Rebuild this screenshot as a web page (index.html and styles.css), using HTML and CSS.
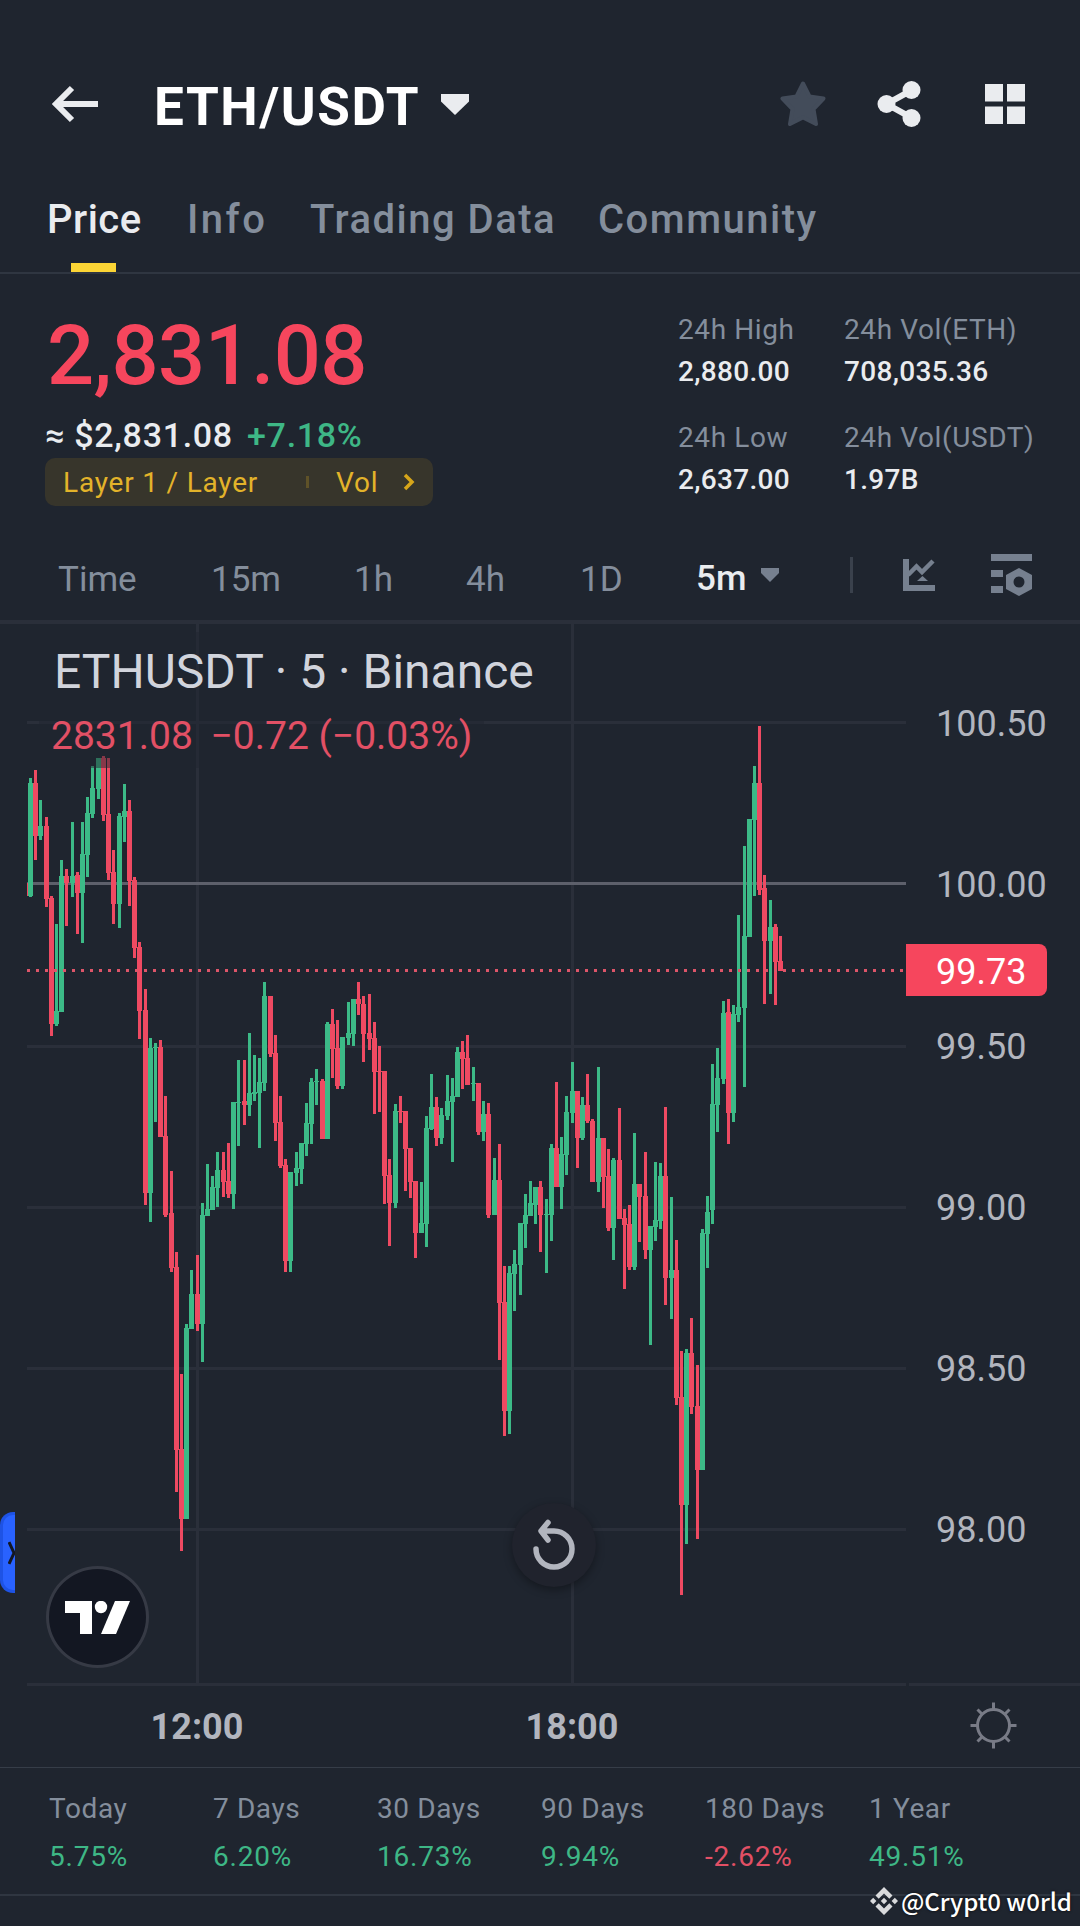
FILE: index.html
```html
<!DOCTYPE html>
<html lang="en">
<head>
<meta charset="UTF-8">
<meta name="viewport" content="width=device-width, initial-scale=1.0">
<title>ETH/USDT</title>
<link rel="stylesheet" href="styles.css">
</head>
<body>

<header class="header">
    <svg class="back" width="48" height="38" viewBox="0 0 48 38">
        <path d="M21 3 L5 19 L21 35 M5 19 H47" fill="none" stroke="#eaecef" stroke-width="6"/>
    </svg>
    <h1 class="pair">ETH/USDT</h1>
    <svg class="pair-caret" width="28" height="21" viewBox="0 0 28 21"><path d="M0 0 H28 V7.500 L14 21 L0 7.500 Z" fill="#eaecef"/></svg>
    <div class="actions">
        <svg width="46" height="48" viewBox="0 0 46 48"><path d="M23 3.500 L29.500 16.500 L43.500 18.500 L33.500 29 L36 44 L23 37.500 L10 44 L12.500 29 L2.500 18.500 L16.500 16.500 Z" fill="#434c5a" stroke="#434c5a" stroke-width="4" stroke-linejoin="round"/></svg>
        <svg width="44" height="48" viewBox="0 0 44 48">
            <path d="M35 10 L9.500 24 L35 38" fill="none" stroke="#eaecef" stroke-width="6"/>
            <g fill="#eaecef"><circle cx="9.500" cy="24" r="9"/><circle cx="34.500" cy="10" r="9"/><circle cx="34.500" cy="38" r="9"/></g>
        </svg>
        <svg width="40" height="40" viewBox="0 0 40 40"><path d="M0 0 H18 V17.500 H0 Z M22 0 H40 V17.500 H22 Z M0 22.500 H18 V40 H0 Z M22 22.500 H40 V40 H22 Z" fill="#eaecef"/></svg>
    </div>
</header>

<nav class="tabs">
    <a class="tab active">Price</a>
    <a class="tab info">Info</a>
    <a class="tab">Trading Data</a>
    <a class="tab">Community</a>
</nav>

<section class="ticker">
    <div>
        <div class="price">2,831.08</div>
        <div class="fiat">≈ $2,831.08 <span class="change">+7.18%</span></div>
        <div class="tag">
            <span class="tag-name">Layer 1 / Layer</span>
            <i class="tag-line"></i>
            <span>Vol</span>
            <svg width="12" height="18" viewBox="0 0 12 18"><path d="M2 2 L9 9 L2 16" fill="none" stroke="#d6a51a" stroke-width="3.500"/></svg>
        </div>
    </div>
    <dl class="stats">
        <div><dt>24h High</dt><dd>2,880.00</dd></div>
        <div><dt>24h Vol(ETH)</dt><dd>708,035.36</dd></div>
        <div><dt>24h Low</dt><dd>2,637.00</dd></div>
        <div><dt>24h Vol(USDT)</dt><dd>1.97B</dd></div>
    </dl>
</section>

<div class="intervals">
    <span>Time</span>
    <span>15m</span>
    <span>1h</span>
    <span>4h</span>
    <span>1D</span>
    <span class="current">5m</span>
    <svg width="18" height="14" viewBox="0 0 18 14"><path d="M0 0 H18 V5 L9 14 L0 5 Z" fill="#76808f"/></svg>
    <i class="divider"></i>
    <svg width="32" height="32" viewBox="0 0 32 32">
        <path d="M3 0 V29 H32" fill="none" stroke="#76808f" stroke-width="6"/>
        <path d="M5 16 L13.500 7.500 L19 13 L30 2" fill="none" stroke="#76808f" stroke-width="4.500"/>
        <path d="M14 22 H25 L19.500 17 Z" fill="#76808f"/>
    </svg>
    <svg width="42" height="42" viewBox="0 0 42 42">
        <path d="M0 0 H41 V7 H0 Z M0 16 H12 V23 H0 Z M0 32 H12 V39 H0 Z" fill="#76808f"/>
        <path fill-rule="evenodd" d="M28 14 L41 21 V35 L28 42 L15 35 V21 Z M28 22.500 A5.500 5.500 0 1 0 28 33.500 A5.500 5.500 0 1 0 28 22.500 Z" fill="#76808f"/>
    </svg>
</div>

<section class="chart">
    <svg class="plot" width="1080" height="1147" viewBox="0 620 1080 1147">
        <g fill="#2a2f3a">
            <rect x="0" y="620" width="1080" height="4"/>
            <rect x="27" y="721" width="879" height="3"/>
            <rect x="27" y="1045" width="879" height="3"/>
            <rect x="27" y="1206" width="879" height="3"/>
            <rect x="27" y="1367" width="879" height="3"/>
            <rect x="27" y="1528" width="879" height="3"/>
            <rect x="196" y="624" width="3" height="1059"/>
            <rect x="571" y="624" width="3" height="1059"/>
            <rect x="27" y="1683" width="879" height="3"/>
            <rect x="909" y="1683" width="171" height="3"/>
        </g>
        <rect x="27" y="882" width="879" height="3" fill="#5d606b"/>
        <g id="candles" shape-rendering="crispEdges"></g>
        <line x1="27" y1="970.500" x2="906" y2="970.500" stroke="#dd5569" stroke-width="3" stroke-dasharray="3 6"/>
        <g class="scale">
            <text x="936" y="736">100.50</text>
            <text x="936" y="897">100.00</text>
            <text x="936" y="1059">99.50</text>
            <text x="936" y="1220">99.00</text>
            <text x="936" y="1381">98.50</text>
            <text x="936" y="1542">98.00</text>
        </g>
        <path d="M906 944 H1039 A8 8 0 0 1 1047 952 V988 A8 8 0 0 1 1039 996 H906 Z" fill="#f6465d"/>
        <text class="last" x="936" y="984">99.73</text>
        <g class="times">
            <text x="197" y="1739">12:00</text>
            <text x="572" y="1739">18:00</text>
        </g>
        <g transform="translate(993.500 1725.500)" fill="none" stroke="#787b86" stroke-width="3">
            <circle r="16"/>
            <path d="M0 -16 V-23 M0 16 V23 M-16 0 H-23 M16 0 H23 M-11.300 -11.300 L-16 -16 M11.300 -11.300 L16 -16 M-11.300 11.300 L-16 16 M11.300 11.300 L16 16"/>
        </g>
    </svg>

    <div class="legend">
        <div class="legend-title">ETHUSDT · 5 · Binance</div>
        <div class="legend-values"><span>2831.08</span> <span>−0.72 (−0.03%)</span></div>
    </div>

    <div class="drawer">
        <svg width="7" height="24" viewBox="0 0 7 24"><path d="M1 1 L6 12 L1 23" fill="none" stroke="#131722" stroke-width="3"/></svg>
    </div>

    <div class="tv-logo">
        <svg width="65" height="33" viewBox="0 0 65 33" fill="#fff"><path d="M0 0 H27 V33 H15 V12 H0 Z"/><circle cx="36" cy="6" r="6.200"/><path d="M50 0 H65 L51 33 H36 Z"/></svg>
    </div>

    <div class="reset">
        <svg width="46" height="52" viewBox="0 0 46 52"><path d="M5 30 A18 18 0 1 0 23 12 H11 M17 3.500 L10 12 L17 21" fill="none" stroke="#b2b5be" stroke-width="5.500" stroke-linecap="round" stroke-linejoin="round"/></svg>
    </div>
</section>

<section class="periods">
    <div><span>Today</span><b>5.75%</b></div>
    <div><span>7 Days</span><b>6.20%</b></div>
    <div><span>30 Days</span><b>16.73%</b></div>
    <div><span>90 Days</span><b>9.94%</b></div>
    <div><span>180 Days</span><b class="down">-2.62%</b></div>
    <div><span>1 Year</span><b>49.51%</b></div>
</section>

<div class="credit">
    <svg width="28" height="28" viewBox="0 0 28 28" fill="#d9dadc"><path d="M14 0 L22.500 8.500 L19.300 11.700 L14 6.400 L8.700 11.700 L5.500 8.500 Z M14 28 L5.500 19.500 L8.700 16.300 L14 21.600 L19.300 16.300 L22.500 19.500 Z M3.200 10.800 L6.400 14 L3.200 17.200 L0 14 Z M24.800 10.800 L28 14 L24.800 17.200 L21.600 14 Z M14 10.800 L17.200 14 L14 17.200 L10.800 14 Z"/></svg>
    <span>@Crypt0 w0rld</span>
</div>

<script src="chart.js"></script>
</body>
</html>
```

FILE: styles.css
```css
body {
    margin: 0;
    width: 1080px;
    height: 1926px;
    overflow: hidden;
    background-color: #1f252f;
    color: #eaecef;
    font-family: Roboto, "Liberation Sans", sans-serif;
}

svg {
    display: block;
    flex: none;
}

.header {
    display: flex;
    align-items: center;
    height: 108px;
    padding: 50px 55px 0 51px;
}

.pair {
    margin: 6px 0 0 55px;
    font-size: 53px;
    font-weight: 700;
    line-height: 64px;
    letter-spacing: 1.6px;
    color: #fff;
}

.pair-caret {
    margin-left: 21px;
}

.actions {
    display: flex;
    align-items: center;
    margin-left: auto;
}

.actions svg + svg {
    margin-left: 51px;
}

.actions svg + svg + svg {
    margin-left: 64px;
}

/* tabs */
.tabs {
    display: grid;
    grid-template-columns: 140px 123px 288px auto;
    height: 74px;
    padding: 40px 0 0 47px;
    border-bottom: 2px solid #2f3641;
}

.tab {
    position: relative;
    justify-self: start;
    font-size: 40px;
    font-weight: 500;
    line-height: 44px;
    letter-spacing: 1.5px;
    color: #848e9c;
}

.tab.info {
    letter-spacing: 2.5px;
}

.tab.active {
    letter-spacing: 0.5px;
    color: #eaecef;
}

.tab.active::after {
    content: "";
    position: absolute;
    left: 24px;
    bottom: 0;
    width: 45px;
    height: 9px;
    background-color: #fcd535;
}

/* price and 24h numbers */
.ticker {
    display: flex;
    justify-content: space-between;
    height: 222px;
    padding: 40px 36px 0 45px;
}

.price {
    margin: 0 0 15px 2px;
    font-size: 83px;
    font-weight: 500;
    line-height: 84px;
    letter-spacing: -0.6px;
    color: #f6465d;
}

.fiat {
    font-size: 34px;
    font-weight: 500;
    line-height: 44px;
    letter-spacing: 0.7px;
}

.change {
    margin-left: 5px;
    color: #3eb786;
}

.tag {
    display: flex;
    align-items: center;
    box-sizing: border-box;
    width: 388px;
    height: 48px;
    margin-top: 1px;
    padding: 0 18px;
    border-radius: 10px;
    background-color: #37352b;
    font-size: 28px;
    letter-spacing: 0.8px;
    color: #e3b32a;
}

.tag-name {
    width: 243px;
}

.tag-line {
    width: 3px;
    height: 12px;
    margin-right: 27px;
    background-color: #5f5228;
}

.tag svg {
    margin-left: auto;
}

.stats {
    display: grid;
    grid-template-columns: 166px 201px;
    row-gap: 24px;
    align-content: start;
    margin: -5px -1px 0 0;
    font-size: 28px;
    line-height: 42px;
    letter-spacing: 0.6px;
}

.stats dt {
    color: #848e9c;
}

.stats dd {
    margin: 0;
    font-weight: 500;
    letter-spacing: 0.3px;
}

.intervals {
    display: grid;
    grid-template-columns: 153px 143px 112px 114px 116px 65px 89px 53px 88px auto;
    align-items: center;
    height: 84px;
    padding-left: 58px;
    font-size: 35px;
    color: #848e9c;
}

.intervals span {
    padding-top: 3px;
}

.intervals svg {
    margin-top: -6px;
}

.intervals .current {
    padding-top: 0;
    font-weight: 500;
    color: #eaecef;
}

.divider {
    width: 3px;
    height: 36px;
    margin-top: -6px;
    background-color: #3a414c;
}

/* chart */
.chart {
    position: relative;
    height: 1147px;
    border-bottom: 1px solid #363d48;
}

.up {
    fill: #3cba87;
}

.down {
    fill: #ee4a62;
}

.scale text,
.last {
    font-size: 36px;
    fill: #b2b5be;
}

.last {
    fill: #fff;
}

.times text {
    font-size: 36px;
    font-weight: 700;
    text-anchor: middle;
    fill: #b2b5be;
}

.legend {
    position: absolute;
    top: 12px;
    left: 39px;
}

.legend-title,
.legend-values {
    width: max-content;
    background-color: rgba(31, 37, 47, 0.5);
}

.legend-title {
    padding: 0 15px;
    font-size: 48px;
    line-height: 79px;
    color: #d1d4dc;
}

.legend-values {
    padding: 1px 12px 8px;
    font-size: 39px;
    line-height: 48px;
    color: #e25065;
}

.legend-values span + span {
    margin-left: 8px;
}

.drawer {
    position: absolute;
    top: 892px;
    left: 0;
    display: flex;
    align-items: center;
    justify-content: flex-end;
    box-sizing: border-box;
    width: 15px;
    height: 81px;
    border: 3px solid #1e53e5;
    border-right: 0;
    border-radius: 13px 0 0 13px;
    background-color: #2962ff;
}

.tv-logo {
    position: absolute;
    top: 946px;
    left: 46px;
    display: flex;
    align-items: center;
    justify-content: center;
    box-sizing: border-box;
    width: 103px;
    height: 102px;
    border: 3px solid #363a45;
    border-radius: 50%;
    background-color: #131722;
}

.reset {
    position: absolute;
    top: 883px;
    left: 512px;
    display: flex;
    align-items: center;
    justify-content: center;
    width: 84px;
    height: 84px;
    border-radius: 50%;
    background-color: #20232d;
    box-shadow: 0 3px 8px rgba(0, 0, 0, 0.35);
}

/* returns by period */
.periods {
    display: grid;
    grid-template-columns: repeat(6, 164px);
    height: 109px;
    padding: 17px 0 0 49px;
    border-bottom: 2px solid #2f3641;
    font-size: 28px;
    line-height: 48px;
    letter-spacing: 0.6px;
}

.periods span {
    display: block;
    color: #848e9c;
}

.periods b {
    font-weight: 400;
    letter-spacing: 0.8px;
    color: #3eb786;
}

.periods .down {
    color: #e25065;
}

.credit {
    display: flex;
    align-items: center;
    justify-content: flex-end;
    gap: 3px;
    margin-top: -13px;
    padding-right: 8px;
    font-family: "Noto Sans CJK SC", "Noto Sans", sans-serif;
    font-size: 24px;
    font-weight: 500;
    line-height: 36px;
    color: #fff;
    text-shadow: 0 0 3px rgba(0, 0, 0, 0.8);
}
```

FILE: chart.js
```js
// direction (1 up, 0 down), wick top, body top, body bottom, wick bottom
var candles = [
    [1,778,783,896,897], [0,770,783,836,860], [1,800,826,836,840], [0,817,826,899,907],
    [0,896,898,1024,1036], [1,924,1011,1024,1026], [1,860,876,1012,1012], [0,869,876,883,926],
    [1,822,876,883,897], [0,872,875,893,934], [1,822,854,893,943], [1,797,813,855,877],
    [1,766,788,814,818], [1,758,758,789,799], [0,756,758,815,821], [0,758,814,873,880],
    [0,850,872,904,924], [1,813,816,904,928], [1,784,811,817,842], [0,800,811,881,906],
    [0,877,880,948,958], [0,942,947,1011,1039], [0,989,1010,1193,1205], [1,1038,1048,1193,1222],
    [1,1043,1047,1048,1122], [0,1040,1047,1137,1137], [0,1096,1136,1215,1217], [0,1171,1213,1268,1272],
    [0,1252,1267,1450,1492], [0,1374,1449,1519,1551], [1,1324,1328,1519,1519], [1,1270,1294,1329,1329],
    [0,1255,1294,1324,1331], [1,1203,1215,1324,1362], [1,1164,1209,1216,1216], [1,1176,1187,1210,1210],
    [1,1152,1170,1188,1207], [0,1152,1170,1182,1197], [0,1143,1181,1194,1198], [1,1102,1102,1194,1209],
    [1,1060,1102,1103,1146], [0,1060,1101,1105,1125], [1,1033,1093,1105,1116], [1,1055,1092,1094,1101],
    [1,1058,1082,1093,1148], [1,982,996,1083,1091], [0,996,996,1054,1057], [0,1035,1053,1123,1141],
    [0,1096,1122,1166,1168], [0,1159,1165,1261,1272], [1,1172,1172,1261,1272], [1,1152,1168,1173,1186],
    [1,1143,1143,1169,1184], [1,1103,1123,1144,1156], [1,1078,1082,1124,1144], [1,1069,1081,1082,1105],
    [0,1079,1081,1139,1139], [1,1022,1024,1139,1139], [0,1009,1024,1049,1078], [0,1020,1048,1086,1089],
    [1,1037,1037,1086,1089], [1,1002,1033,1038,1045], [1,999,999,1034,1046], [0,982,999,1004,1015],
    [0,996,1004,1034,1062], [0,994,1033,1039,1050], [0,1022,1038,1072,1114], [0,1046,1071,1072,1112],
    [0,1071,1071,1176,1204], [0,1159,1175,1203,1246], [1,1104,1111,1203,1208], [0,1096,1111,1112,1123],
    [0,1111,1111,1149,1191], [0,1148,1148,1182,1198], [0,1181,1181,1233,1258], [1,1182,1223,1233,1233],
    [1,1116,1128,1224,1247], [1,1074,1107,1129,1130], [0,1097,1107,1138,1146], [1,1108,1115,1138,1144],
    [1,1075,1101,1116,1120], [1,1078,1096,1102,1162], [1,1047,1052,1097,1097], [0,1041,1052,1059,1089],
    [0,1035,1058,1085,1085], [1,1067,1083,1084,1101], [0,1083,1083,1132,1135], [1,1101,1114,1132,1141],
    [0,1103,1114,1215,1218], [1,1158,1180,1215,1215], [0,1144,1180,1303,1360], [0,1266,1302,1411,1436],
    [1,1266,1273,1411,1434], [1,1250,1264,1274,1311], [1,1223,1223,1265,1295], [1,1194,1215,1224,1248],
    [1,1181,1203,1216,1216], [1,1187,1187,1205,1224], [0,1181,1187,1215,1252], [1,1199,1214,1215,1273],
    [1,1144,1148,1215,1241], [0,1082,1148,1187,1187], [1,1137,1154,1187,1209], [1,1096,1112,1155,1175],
    [1,1062,1091,1113,1123], [0,1091,1091,1138,1168], [1,1097,1105,1138,1140], [0,1074,1105,1121,1123],
    [0,1119,1121,1182,1182], [1,1067,1138,1182,1192], [0,1138,1138,1177,1208], [0,1149,1176,1228,1231],
    [1,1158,1160,1228,1260], [0,1108,1160,1219,1219], [0,1209,1218,1225,1289], [0,1205,1224,1267,1270],
    [1,1133,1184,1267,1270], [0,1184,1184,1197,1242], [0,1152,1196,1250,1259], [1,1226,1226,1250,1345],
    [1,1162,1220,1227,1241], [1,1163,1176,1221,1229], [0,1107,1176,1278,1305], [1,1197,1270,1278,1319],
    [0,1240,1270,1398,1405], [0,1351,1397,1505,1595], [1,1349,1353,1505,1544], [0,1318,1353,1407,1414],
    [0,1365,1406,1470,1539], [1,1229,1233,1470,1470], [1,1196,1212,1234,1268], [1,1064,1104,1210,1224],
    [1,1048,1078,1105,1132], [1,1001,1013,1079,1084], [0,999,1012,1113,1144], [1,1005,1014,1113,1122],
    [1,915,1007,1015,1022], [1,846,936,1008,1087], [1,819,819,937,937], [1,766,783,820,896],
    [0,726,783,890,895], [0,875,888,941,1004], [1,900,927,941,994], [0,924,927,962,1005],
    [0,936,961,971,971]
];

var group = document.getElementById("candles");

function addRect(x, y, width, height, name) {
    var rect = document.createElementNS("http://www.w3.org/2000/svg", "rect");
    rect.setAttribute("x", x);
    rect.setAttribute("y", y);
    rect.setAttribute("width", width);
    rect.setAttribute("height", height);
    rect.setAttribute("class", name);
    group.appendChild(rect);
}

// right edge of the candle that is cut off by the left border
addRect(27, 883, 1, 13, "down");

// 72 candles (6 hours) take 375px
for (var i = 0; i < candles.length; i++) {
    var c = candles[i];
    var x = Math.floor(29.48 + i * 375 / 72);
    var name = c[0] ? "up" : "down";
    addRect(x, c[1], 3, c[4] - c[1], name);
    addRect(x - 1, c[2], 5, c[3] - c[2], name);
}
```
